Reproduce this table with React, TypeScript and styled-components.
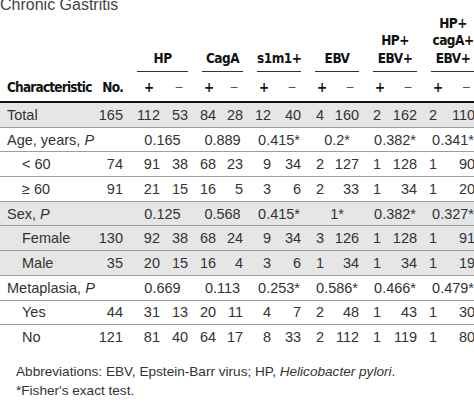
import styled, { createGlobalStyle } from 'styled-components'

const GlobalStyle = createGlobalStyle`
  html, body {
    margin: 0;
    padding: 0;
    overflow: hidden;
    background: #fff;
  }
  body {
    font-family: "Liberation Sans", Arial, sans-serif;
    color: #333;
  }
`

type DataRow = {
  label: string
  italicP?: boolean
  indent?: boolean
  grey?: boolean
  no?: string
  vals?: string[]
  p?: string[]
}

const groups = [
  ['HP'],
  ['CagA'],
  ['s1m1+'],
  ['EBV'],
  ['HP+', 'EBV+'],
  ['HP+', 'cagA+', 'EBV+'],
]

const rows: DataRow[] = [
  { label: 'Total', grey: true, no: '165', vals: ['112', '53', '84', '28', '12', '40', '4', '160', '2', '162', '2', '110'] },
  { label: 'Age, years, ', italicP: true, p: ['0.165', '0.889', '0.415*', '0.2*', '0.382*', '0.341*'] },
  { label: '< 60', indent: true, no: '74', vals: ['91', '38', '68', '23', '9', '34', '2', '127', '1', '128', '1', '90'] },
  { label: '≥ 60', indent: true, no: '91', vals: ['21', '15', '16', '5', '3', '6', '2', '33', '1', '34', '1', '20'] },
  { label: 'Sex, ', italicP: true, grey: true, p: ['0.125', '0.568', '0.415*', '1*', '0.382*', '0.327*'] },
  { label: 'Female', indent: true, grey: true, no: '130', vals: ['92', '38', '68', '24', '9', '34', '3', '126', '1', '128', '1', '91'] },
  { label: 'Male', indent: true, grey: true, no: '35', vals: ['20', '15', '16', '4', '3', '6', '1', '34', '1', '34', '1', '19'] },
  { label: 'Metaplasia, ', italicP: true, p: ['0.669', '0.113', '0.253*', '0.586*', '0.466*', '0.479*'] },
  { label: 'Yes', indent: true, no: '44', vals: ['31', '13', '20', '11', '4', '7', '2', '48', '1', '43', '1', '30'] },
  { label: 'No', indent: true, no: '121', vals: ['81', '40', '64', '17', '8', '33', '2', '112', '1', '119', '1', '80'] },
]

// cell widths: characteristic, No., then +/− pairs
const widths = [96, 29, 37, 28, 28, 27, 28, 30, 23, 35, 22, 36, 20, 38]

const Page = styled.div`
  width: 474px;
  height: 401px;
  overflow: hidden;
`

const Title = styled.div`
  margin-top: -3px;
  font-size: 16px;
  line-height: 15px;
  color: #444;
`

const Table = styled.table`
  border-collapse: collapse;
  table-layout: fixed;
  width: ${widths.reduce((a, b) => a + b, 0)}px;
  font-size: 14.5px;
`

const GroupRow = styled.tr`
  height: 60px;
`

const GroupCell = styled.th`
  padding: 0 2px 0 12px;
  vertical-align: bottom;
`

const GroupLabel = styled.div`
  font-family: "DejaVu Sans Condensed", "DejaVu Sans", sans-serif;
  font-weight: bold;
  font-size: 13.5px;
  letter-spacing: -0.5px;
  line-height: 17.5px;
  color: #111;
  text-align: center;
  padding-bottom: 4px;
  border-bottom: 1px solid #333;
  white-space: nowrap;
`

const HeadRow = styled.tr`
  height: 30px;
  border-bottom: 2px solid #111;
`

const HeadCell = styled.th<{ $align: 'left' | 'right'; $pl?: number; $pr?: number }>`
  font-family: "DejaVu Sans Condensed", "DejaVu Sans", sans-serif;
  font-weight: bold;
  font-size: 13.5px;
  letter-spacing: -0.8px;
  color: #111;
  text-align: ${(p) => p.$align};
  padding: 0 ${(p) => p.$pr ?? 0}px 6px ${(p) => p.$pl ?? 0}px;
  vertical-align: bottom;
  white-space: nowrap;
`

const Minus = styled.span`
  font-family: "Liberation Sans", Arial, sans-serif;
  font-weight: normal;
  font-size: 14px;
  letter-spacing: 0;
  color: #555;
`

const BodyRow = styled.tr<{ $grey?: boolean }>`
  background: ${(p) => (p.$grey ? '#e6e6e6' : '#fff')};
  & + & {
    border-top: 1px solid #9c9c9c;
  }
`

const LabelCell = styled.td<{ $indent?: boolean }>`
  height: 23.7px;
  padding: 0 0 0 ${(p) => (p.$indent ? 22 : 7)}px;
  white-space: nowrap;
  color: #333;
`

const NumCell = styled.td`
  text-align: right;
  padding: 0 2px 0 0;
  white-space: nowrap;
`

const PCell = styled.td`
  text-align: center;
  padding: 0 2px 0 12px;
  white-space: nowrap;
`

const Notes = styled.div`
  margin-top: 13px;
  padding-left: 16px;
  font-size: 13.6px;
  line-height: 19px;
  color: #333;
  white-space: nowrap;
`

export default function App() {
  return (
    <Page>
      <GlobalStyle />
      <Title>Chronic Gastritis</Title>
      <Table>
        <colgroup>
          {widths.map((w, i) => (
            <col key={i} style={{ width: w }} />
          ))}
        </colgroup>
        <thead>
          <GroupRow>
            <th />
            <th />
            {groups.map((g, i) => (
              <GroupCell key={i} colSpan={2}>
                <GroupLabel>
                  {g.map((line, j) => (
                    <div key={j}>{line}</div>
                  ))}
                </GroupLabel>
              </GroupCell>
            ))}
          </GroupRow>
          <HeadRow>
            <HeadCell $align="left" $pl={7}>
              Characteristic
            </HeadCell>
            <HeadCell $align="right" $pr={2}>
              No.
            </HeadCell>
            {groups.map((_, i) => [
              <HeadCell key={`p${i}`} $align="left" $pl={i === 0 ? 19 : 14}>
                +
              </HeadCell>,
              <HeadCell key={`m${i}`} $align="right" $pr={7}>
                <Minus>−</Minus>
              </HeadCell>,
            ])}
          </HeadRow>
        </thead>
        <tbody>
          {rows.map((r, i) => (
            <BodyRow key={i} $grey={r.grey}>
              <LabelCell $indent={r.indent}>
                {r.label}
                {r.italicP && <i>P</i>}
              </LabelCell>
              <NumCell>{r.no ?? ''}</NumCell>
              {r.vals && r.vals.map((v, j) => <NumCell key={j}>{v}</NumCell>)}
              {r.p && r.p.map((v, j) => <PCell key={j} colSpan={2}>{v}</PCell>)}
            </BodyRow>
          ))}
        </tbody>
      </Table>
      <Notes>
        <div>
          Abbreviations: EBV, Epstein-Barr virus; HP, <i>Helicobacter pylori</i>.
        </div>
        <div>*Fisher's exact test.</div>
      </Notes>
    </Page>
  )
}
